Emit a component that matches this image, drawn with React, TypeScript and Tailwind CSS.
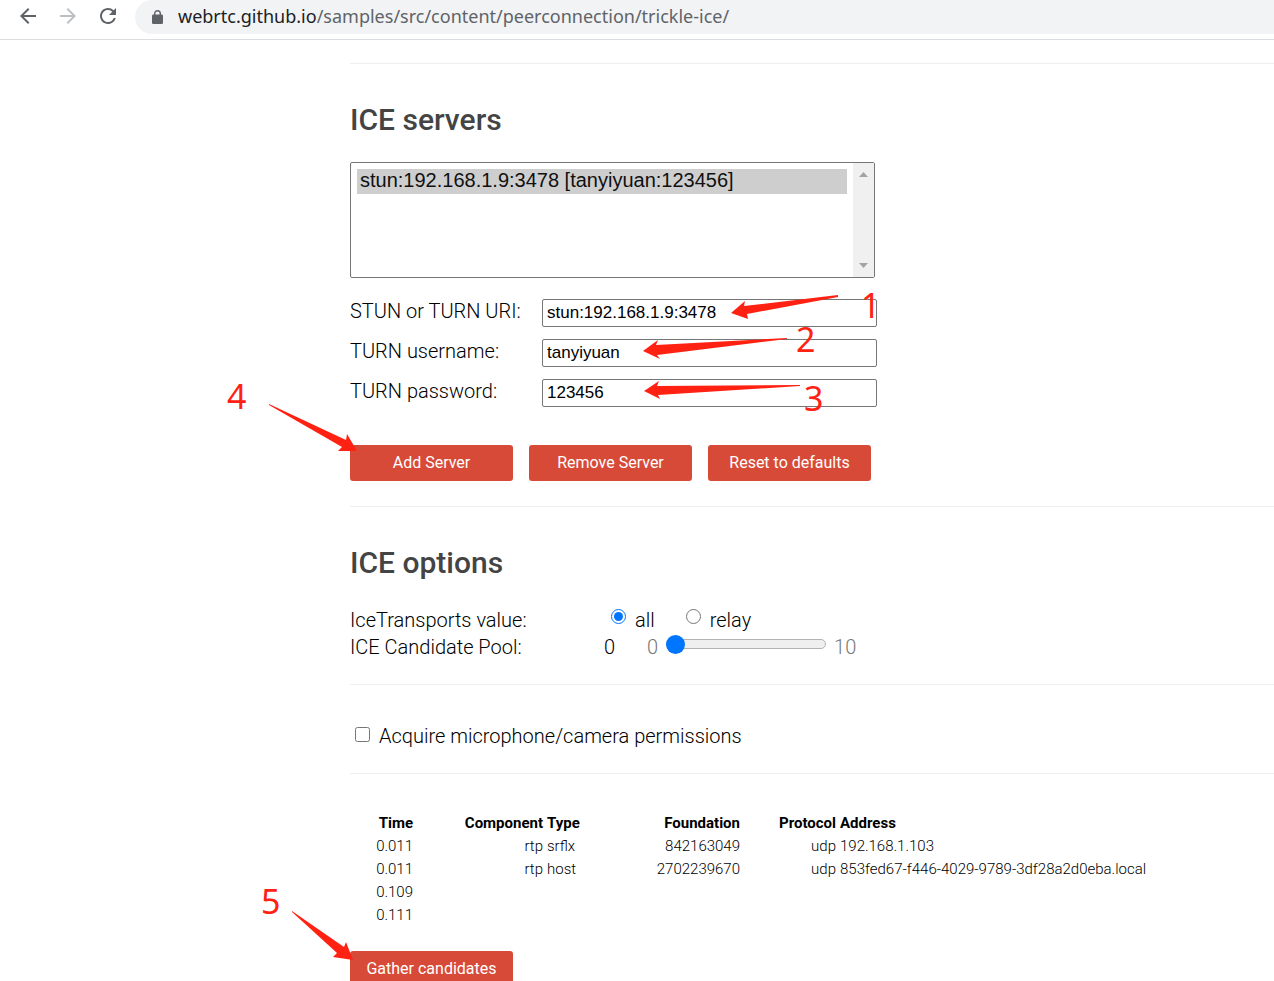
import { useState } from "react";
import { MdArrowBack, MdArrowForward, MdRefresh } from "react-icons/md";

const servers = ["stun:192.168.1.9:3478 [tanyiyuan:123456]"];

const candidates = [
  {
    time: "0.011",
    component: "rtp",
    type: "srflx",
    foundation: "842163049",
    protocol: "udp",
    address: "192.168.1.103"
  },
  {
    time: "0.011",
    component: "rtp",
    type: "host",
    foundation: "2702239670",
    protocol: "udp",
    address: "853fed67-f446-4029-9789-3df28a2d0eba.local"
  },
  { time: "0.109" },
  { time: "0.111" }
];

const marks = [
  { label: "1", x: 861, y: 318, points: "838,295 744,306 745,301 731,313 748,319 747,314 838,297" },
  { label: "2", x: 796, y: 352, points: "787,338 656,345 658,340 643,351 660,359 657,355 787,339" },
  { label: "3", x: 804, y: 411, points: "800,385 657,386 659,381 644,391 660,399 658,395 800,386" },
  { label: "4", x: 227, y: 409, points: "269,404 346,440 347,434 357,451 338,451 342,447 269,405" },
  { label: "5", x: 261, y: 914, points: "292,911 344,947 346,942 353,960 333,957 337,953 292,912" }
];

const Toolbar = () => (
  <header className="flex h-10 items-start border-b border-[#dadce0] bg-white">
    <nav className="flex w-[135px] shrink-0 items-center gap-4 pt-1 pl-4">
      <button aria-label="Back" className="text-[#5f6368]">
        <MdArrowBack size={24} />
      </button>
      <button aria-label="Forward" className="text-[#bdc1c6]">
        <MdArrowForward size={24} />
      </button>
      <button aria-label="Reload" className="text-[#5f6368]">
        <MdRefresh size={24} />
      </button>
    </nav>
    <div className="flex h-[34px] flex-1 items-center rounded-l-full bg-[#f1f3f4] pl-[17px]">
      <svg width="11" height="14" viewBox="0 0 11 14">
        <path d="M2.700 5V3.500a2.800 2.800 0 0 1 5.600 0V5" fill="none" stroke="#5f6368" strokeWidth="1.400" />
        <rect y="4.500" width="11" height="9.500" rx="1.300" fill="#5f6368" />
      </svg>
      <span className="ml-[15px] pb-[2px] font-['Noto_Sans',sans-serif] text-[18px] leading-6 font-normal whitespace-nowrap text-[#5f6368]">
        <span className="text-[#202124]">webrtc.github.io</span>
        /samples/src/content/peerconnection/trickle-ice/
      </span>
    </div>
  </header>
);

const Title = ({ children }: { children: string }) => (
  <h2 className="text-[30px] leading-10 font-medium text-[#444]">{children}</h2>
);

const RedButton = ({ children }: { children: string }) => (
  <button className="h-9 w-[163px] rounded-[3px] bg-[#d84a38] text-[16px] leading-6 font-normal text-white">
    {children}
  </button>
);

const Field = ({ id, label, value }: { id: string; label: string; value: string }) => {
  const [text, setText] = useState(value);

  return (
    <div className="flex h-7 items-start">
      <label htmlFor={id} className="w-48 leading-6">
        {label}
      </label>
      <input
        id={id}
        value={text}
        onChange={(e) => setText(e.target.value)}
        className="h-7 w-[335px] rounded-[2px] border border-[#767676] px-1 font-['Liberation_Sans',sans-serif] text-[17px] font-normal"
      />
    </div>
  );
};

const Servers = () => (
  <section className="border-t border-[#eee] pt-9 pb-[25px]">
    <Title>ICE servers</Title>
    <div className="mt-[22px] flex h-[116px] w-[525px] rounded-[2px] border border-[#767676]">
      <select
        multiple
        size={4}
        aria-label="ICE servers"
        defaultValue={servers}
        className="flex-1 overflow-hidden p-[6px] font-['Liberation_Sans',sans-serif] text-[20px] font-normal outline-none"
      >
        {servers.map((server) => (
          <option key={server} className="h-[25px] px-[3px] py-0 leading-6">
            {server}
          </option>
        ))}
      </select>
      <div className="flex w-[21px] flex-col items-center justify-between bg-[#f0f0f0] py-[9px]">
        <svg width="9" height="5" viewBox="0 0 9 5">
          <path d="M0 5L4.500 0L9 5Z" fill="#a3a3a3" />
        </svg>
        <svg width="9" height="5" viewBox="0 0 9 5">
          <path d="M0 0L4.500 5L9 0Z" fill="#a3a3a3" />
        </svg>
      </div>
    </div>
    <div className="mt-[21px] flex flex-col gap-3">
      <Field id="url" label="STUN or TURN URI:" value="stun:192.168.1.9:3478" />
      <Field id="username" label="TURN username:" value="tanyiyuan" />
      <Field id="password" label="TURN password:" value="123456" />
    </div>
    <div className="mt-[38px] flex gap-4">
      <RedButton>Add Server</RedButton>
      <RedButton>Remove Server</RedButton>
      <RedButton>Reset to defaults</RedButton>
    </div>
  </section>
);

const Options = () => {
  const [pool, setPool] = useState(0);

  return (
    <section className="border-t border-[#eee] pt-9 pb-[23px]">
      <Title>ICE options</Title>
      <div className="mt-6 flex">
        <span className="w-[261px]">IceTransports value:</span>
        <div className="flex gap-[31px]">
          <label className="flex gap-[9px]">
            <input type="radio" name="transports" defaultChecked className="mt-[2px] size-[15px] accent-[#0075ff]" />
            all
          </label>
          <label className="flex gap-[9px]">
            <input type="radio" name="transports" className="mt-[2px] size-[15px] accent-[#0075ff]" />
            relay
          </label>
        </div>
      </div>
      <div className="flex">
        <label htmlFor="pool" className="w-[254px]">
          ICE Candidate Pool:
        </label>
        <span className="w-[43px]">{pool}</span>
        <span className="text-[#777]">0</span>
        <input
          id="pool"
          type="range"
          min={0}
          max={10}
          value={pool}
          onChange={(e) => setPool(Number(e.target.value))}
          className="mx-2 mt-[5px] h-[10px] w-40 appearance-none rounded-full border border-[#b2b2b2] bg-[#efefef] [&::-webkit-slider-thumb]:-ml-px [&::-webkit-slider-thumb]:size-[19px] [&::-webkit-slider-thumb]:appearance-none [&::-webkit-slider-thumb]:rounded-full [&::-webkit-slider-thumb]:bg-[#0075ff]"
        />
        <span className="text-[#777]">10</span>
      </div>
    </section>
  );
};

const Permissions = () => (
  <section className="border-t border-[#eee] pt-[38px] pb-[23px]">
    <label className="flex gap-[9px] pl-[5px]">
      <input type="checkbox" className="mt-1 size-[15px]" />
      Acquire microphone/camera permissions
    </label>
  </section>
);

const Candidates = () => (
  <section className="border-t border-[#eee] pt-[38px]">
    <table className="table-fixed text-[15px] leading-[23px]">
      <thead>
        <tr>
          <th className="w-[63px] text-right font-bold">Time</th>
          <th className="w-[132px] pr-[2px] text-right font-bold">Component</th>
          <th className="w-[85px] pl-[2px] text-left font-bold">Type</th>
          <th className="w-[110px] text-right font-bold">Foundation</th>
          <th className="w-[98px] pr-[2px] text-right font-bold">Protocol</th>
          <th className="w-[360px] pl-[2px] text-left font-bold">Address</th>
        </tr>
      </thead>
      <tbody>
        {candidates.map((c, i) => (
          <tr key={i}>
            <td className="text-right">{c.time}</td>
            <td className="pr-[2px] text-right">{c.component}</td>
            <td className="pl-[2px]">{c.type}</td>
            <td className="text-right">{c.foundation}</td>
            <td className="pr-[2px] text-right">{c.protocol}</td>
            <td className="pl-[2px]">{c.address}</td>
          </tr>
        ))}
      </tbody>
    </table>
    <div className="mt-6">
      <RedButton>Gather candidates</RedButton>
    </div>
  </section>
);

// numbered arrows drawn over the page
const Marks = () => (
  <svg className="pointer-events-none absolute top-0 left-0" width="900" height="981" fill="#ff2212">
    {marks.map((m) => (
      <g key={m.label}>
        <polygon points={m.points} />
        <text x={m.x} y={m.y} className="font-['Noto_Sans',sans-serif] text-[34px] font-normal">
          {m.label}
        </text>
      </g>
    ))}
  </svg>
);

const App = () => (
  <div className="relative h-screen overflow-hidden bg-white font-[Roboto,sans-serif] text-[20px] leading-[27px] font-light text-black">
    <Toolbar />
    <main className="pt-[23px] pl-[350px]">
      <Servers />
      <Options />
      <Permissions />
      <Candidates />
    </main>
    <Marks />
  </div>
);

export default App;
